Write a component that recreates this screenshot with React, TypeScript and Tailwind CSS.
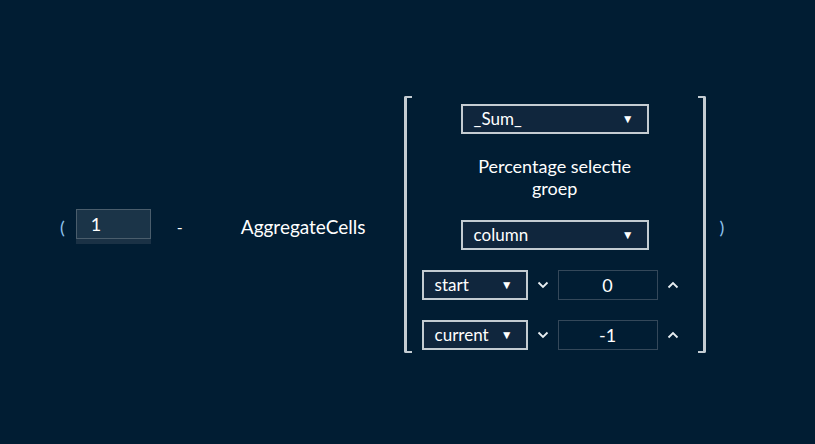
const font = { fontFamily: 'Lato, "Open Sans", sans-serif' };

const Caret = () => (
    <span className="text-[12px] leading-none text-white">▼</span>
);

const Select = ({ label, width }: { label: string; width: string }) => (
    <div className={`${width} h-[30px] flex items-center justify-between pl-[11px] pr-[13px] bg-[#10263d] border-2 border-[#c4ccd2] text-white text-[17px]`}>
        <span>{label}</span>
        <Caret />
    </div>
);

const Chevron = ({ up }: { up?: boolean }) => (
    <svg width="12" height="8" viewBox="0 0 12 8" className="shrink-0">
        <polyline
            points={up ? '1.5,6.5 6,2 10.5,6.5' : '1.5,1.5 6,6 10.5,1.5'}
            fill="none"
            stroke="#e8eef2"
            strokeWidth="1.8"
        />
    </svg>
);

const NumberRow = ({ label, value }: { label: string; value: string }) => (
    <div className="flex items-center pl-[10px]">
        <Select label={label} width="w-[106px]" />
        <div className="ml-[9px]"><Chevron /></div>
        <div className="ml-[9px] w-[100px] h-[30px] flex items-center justify-center border border-[#34485a] text-white text-[18px]">
            {value}
        </div>
        <div className="ml-[9px]"><Chevron up /></div>
    </div>
);

const Bracket = ({ right }: { right?: boolean }) => (
    <div
        className={`w-[8px] self-stretch border-y-2 border-[#c4ccd2] ${right ? 'border-r-[3px] rounded-r-[2px]' : 'border-l-[3px] rounded-l-[2px]'}`}
    />
);

const App = () => {
    return (
        <div className="w-[815px] h-[444px] bg-[#011d33] flex items-center pl-[60px] pt-[4px]" style={font}>
            <span className="text-[#8fc4ee] text-[18px] mt-[6px]">(</span>
            <div className="ml-[11px] flex flex-col mt-[5px]">
                <div className="w-[75px] h-[30px] bg-[#1b3448] border border-[#4a5d6c] text-white text-[18px] pl-[14px] flex items-center">
                    1
                </div>
                <div className="w-[75px] h-[5px] bg-[#1a3145]" />
            </div>
            <span className="ml-[26px] text-white text-[16px] mt-[6px]">-</span>
            <span className="ml-[58px] text-white text-[19px] mt-[6px]">AggregateCells</span>
            <div className="ml-[38px] flex h-[257px] mt-[1px]">
                <Bracket />
                <div className="w-[286px] flex flex-col pt-[8px]">
                    <div className="flex justify-center">
                        <Select label="_Sum_" width="w-[188px]" />
                    </div>
                    <div className="mt-[21px] text-center text-white text-[18px] leading-[22px]">
                        Percentage selectie<br />groep
                    </div>
                    <div className="mt-[21px] flex justify-center">
                        <Select label="column" width="w-[188px]" />
                    </div>
                    <div className="mt-[20px]">
                        <NumberRow label="start" value="0" />
                    </div>
                    <div className="mt-[20px]">
                        <NumberRow label="current" value="-1" />
                    </div>
                </div>
                <Bracket right />
            </div>
            <span className="ml-[14px] text-[#8fc4ee] text-[18px] mt-[6px]">)</span>
        </div>
    );
};

export default App;
